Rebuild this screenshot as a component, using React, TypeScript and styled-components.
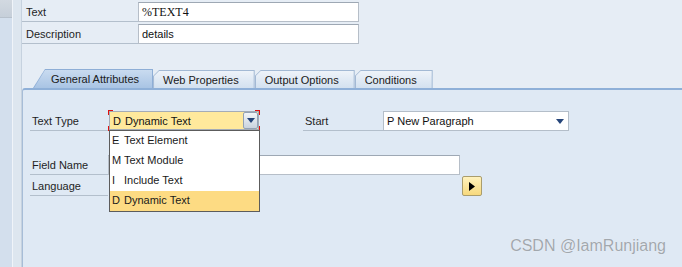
import React from "react";
import styled, { createGlobalStyle } from "styled-components";

const Global = createGlobalStyle`
  html, body { margin: 0; padding: 0; }
  body { font-family: "Liberation Sans", Arial, sans-serif; font-size: 11px; color: #1e1e1e; }
  #root { width: 682px; height: 267px; overflow: hidden; }
`;

const Page = styled.div`
  position: relative;
  display: flex;
  width: 682px;
  height: 267px;
  background: #e6edf5;
`;

const SideBar = styled.div`
  width: 12px;
  display: flex;
  flex-direction: column;
  background: #d3dfed;
  border-right: 1px solid #f0f4f9;
`;

const SideTop = styled.div`
  height: 17px;
  background: linear-gradient(#d2d9e1, #c6cfd9);
  border-bottom: 1px solid #b7c1cc;
`;

const SideGap = styled.div`
  width: 8px;
  background: #dde6ef;
  border-right: 1px solid #c6d2df;
`;

const Main = styled.div`
  flex: 1;
  display: flex;
  flex-direction: column;
  padding-top: 2px;
`;

const HeaderForm = styled.div`
  display: flex;
  flex-direction: column;
  gap: 2px;
`;

const HeaderRow = styled.div`
  display: flex;
  height: 20px;
`;

const Label = styled.div<{ $w: number; $pad?: number }>`
  width: ${(p) => p.$w}px;
  padding-left: ${(p) => p.$pad ?? 2}px;
  box-sizing: border-box;
  display: flex;
  align-items: center;
  border-bottom: 1px solid #b3bfcc;
  color: #1e1e1e;
  font-size: 11px;
`;

const TextInput = styled.div<{ $w: number; $serif?: boolean }>`
  width: ${(p) => p.$w}px;
  box-sizing: border-box;
  background: #fff;
  border: 1px solid #b6bec8;
  border-top-color: #9ea8b4;
  display: flex;
  align-items: center;
  padding-left: 3px;
  font-family: ${(p) => (p.$serif ? '"Liberation Serif", "Times New Roman", serif' : '"Liberation Sans", Arial, sans-serif')};
  font-size: ${(p) => (p.$serif ? 12 : 11)}px;
  color: #111;
`;

const TabStrip = styled.div`
  display: flex;
  align-items: flex-end;
  height: 19px;
  margin-top: 25px;
  padding-left: 11px;
`;

const TabShell = styled.div<{ $active?: boolean }>`
  display: flex;
  height: ${(p) => (p.$active ? 19 : 18)}px;
  padding: 1px 1px 0 1px;
  box-sizing: border-box;
  background: ${(p) => (p.$active ? "#8eaed6" : "#a3b9d4")};
  clip-path: ${(p) =>
    p.$active
      ? "polygon(12px 0, 100% 0, 100% 100%, 0 100%)"
      : "polygon(0 6px, 6px 0, 100% 0, 100% 100%, 0 100%)"};
`;

const TabFace = styled.div<{ $active?: boolean }>`
  display: flex;
  align-items: center;
  padding: ${(p) => (p.$active ? "0 13px 0 17px" : "0 15px 0 9px")};
  background: ${(p) =>
    p.$active
      ? "linear-gradient(#c9dbf0, #a9c4e4)"
      : "linear-gradient(#eef3f9, #d3e1f0)"};
  clip-path: ${(p) =>
    p.$active
      ? "polygon(11px 0, 100% 0, 100% 100%, 0 100%)"
      : "polygon(0 5px, 5px 0, 100% 0, 100% 100%, 0 100%)"};
  color: #1a1a1a;
  font-size: 11px;
  white-space: nowrap;
`;

const Panel = styled.div`
  flex: 1;
  display: flex;
  flex-direction: column;
  background: #dfe9f4;
  border-top: 2px solid #8fb0d8;
  border-left: 1px solid #a7bdd7;
  border-top-left-radius: 3px;
  padding: 21px 0 0 7px;
`;

const FormRow = styled.div<{ $mt?: number }>`
  display: flex;
  height: 20px;
  margin-top: ${(p) => p.$mt ?? 0}px;
`;

const FocusFrame = styled.div`
  position: relative;
  width: 152px;
  height: 21px;
  padding: 1px;
  box-sizing: border-box;
  margin-top: -1px;
  background:
    linear-gradient(#e01010, #e01010) left top / 5px 2px no-repeat,
    linear-gradient(#e01010, #e01010) left top / 2px 5px no-repeat,
    linear-gradient(#e01010, #e01010) right top / 5px 2px no-repeat,
    linear-gradient(#e01010, #e01010) right top / 2px 5px no-repeat,
    linear-gradient(#e01010, #e01010) left bottom / 5px 2px no-repeat,
    linear-gradient(#e01010, #e01010) left bottom / 2px 5px no-repeat,
    linear-gradient(#e01010, #e01010) right bottom / 5px 2px no-repeat,
    linear-gradient(#e01010, #e01010) right bottom / 2px 5px no-repeat;
`;

const Combo = styled.div<{ $w?: number; $focused?: boolean }>`
  width: ${(p) => (p.$w ? `${p.$w}px` : "100%")};
  height: ${(p) => (p.$focused ? "100%" : "20px")};
  box-sizing: border-box;
  display: flex;
  align-items: center;
  background: ${(p) => (p.$focused ? "#ffe99c" : "#fff")};
  border: 1px solid ${(p) => (p.$focused ? "#a4acb6" : "#b4bec9")};
  padding-left: 3px;
  font-size: 11px;
  color: #111;
`;

const ComboText = styled.span`
  flex: 1;
  white-space: nowrap;
`;

const Code = styled.span`
  display: inline-block;
  width: 12px;
`;

const ArrowButton = styled.div`
  width: 15px;
  height: 17px;
  box-sizing: border-box;
  display: flex;
  align-items: center;
  justify-content: center;
  background: linear-gradient(#f2f5f8, #c9d3de);
  border: 1px solid #93a2b5;
  border-radius: 2px;
`;

const PlainArrow = styled.div`
  width: 16px;
  display: flex;
  justify-content: center;
`;

const DownTri = () => (
  <svg width="8" height="5" viewBox="0 0 8 5">
    <path d="M0 0h8L4 5z" fill="#26457a" />
  </svg>
);

const Gap = styled.div<{ $w: number }>`
  width: ${(p) => p.$w}px;
`;

const ListBox = styled.div`
  position: absolute;
  left: 1px;
  top: 20px;
  width: 151px;
  box-sizing: border-box;
  background: #fff;
  border: 1px solid #5c5c5c;
  z-index: 5;
`;

const ListItem = styled.div<{ $sel?: boolean }>`
  height: 20px;
  box-sizing: border-box;
  padding: 0 0 2px 2px;
  display: flex;
  align-items: center;
  background: ${(p) => (p.$sel ? "#fddb83" : "transparent")};
  color: #1a1a1a;
  font-size: 11px;
  white-space: nowrap;
`;

const PushButton = styled.div`
  width: 20px;
  height: 20px;
  box-sizing: border-box;
  display: flex;
  align-items: center;
  justify-content: center;
  background: linear-gradient(#fff2bd, #f7d97d);
  border: 1px solid #aa9d6c;
  border-radius: 2px;
`;

const Watermark = styled.div`
  position: absolute;
  right: 16px;
  top: 237px;
  font-family: "Liberation Sans", Arial, sans-serif;
  font-size: 16px;
  color: #a2a8ae;
  text-shadow: 0 0 1px rgba(255, 255, 255, 0.8);
`;

const items: [string, string, boolean][] = [
  ["E", "Text Element", false],
  ["M", "Text Module", false],
  ["I", "Include Text", false],
  ["D", "Dynamic Text", true],
];

export default function App() {
  return (
    <>
      <Global />
      <Page>
        <SideBar>
          <SideTop />
        </SideBar>
        <SideGap />
        <Main>
          <HeaderForm>
            <HeaderRow>
              <Label $w={116} $pad={4}>Text</Label>
              <TextInput $w={221} $serif>%TEXT4</TextInput>
            </HeaderRow>
            <HeaderRow>
              <Label $w={116} $pad={4}>Description</Label>
              <TextInput $w={221}>details</TextInput>
            </HeaderRow>
          </HeaderForm>
          <TabStrip>
            <TabShell $active>
              <TabFace $active>General Attributes</TabFace>
            </TabShell>
            <TabShell>
              <TabFace>Web Properties</TabFace>
            </TabShell>
            <TabShell>
              <TabFace>Output Options</TabFace>
            </TabShell>
            <TabShell>
              <TabFace>Conditions</TabFace>
            </TabShell>
          </TabStrip>
          <Panel>
            <FormRow>
              <Label $w={78}>Text Type</Label>
              <FocusFrame>
                <Combo $focused>
                  <ComboText>
                    <Code>D</Code>Dynamic Text
                  </ComboText>
                  <ArrowButton>
                    <DownTri />
                  </ArrowButton>
                </Combo>
                <ListBox>
                  {items.map(([c, t, s]) => (
                    <ListItem key={c} $sel={s}>
                      <Code>{c}</Code>
                      {t}
                    </ListItem>
                  ))}
                </ListBox>
              </FocusFrame>
              <Gap $w={43} />
              <Label $w={80}>Start</Label>
              <Combo $w={186}>
                <ComboText>P New Paragraph</ComboText>
                <PlainArrow>
                  <DownTri />
                </PlainArrow>
              </Combo>
            </FormRow>
            <FormRow $mt={24}>
              <Label $w={78}>Field Name</Label>
              <TextInput $w={352} />
            </FormRow>
            <FormRow $mt={1}>
              <Label $w={78}>Language</Label>
              <Gap $w={354} />
              <PushButton>
                <svg width="6" height="9" viewBox="0 0 6 9">
                  <path d="M0 0l6 4.5L0 9z" fill="#000" />
                </svg>
              </PushButton>
            </FormRow>
          </Panel>
        </Main>
        <Watermark>CSDN @IamRunjiang</Watermark>
      </Page>
    </>
  );
}
